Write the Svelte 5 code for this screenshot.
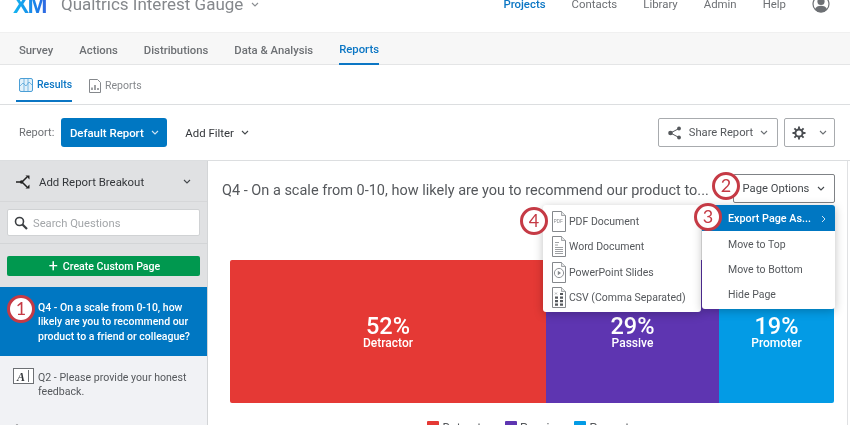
<script lang="ts">
	const topLinks = ['Contacts', 'Library', 'Admin', 'Help'];
	const navItems = ['Survey', 'Actions', 'Distributions', 'Data & Analysis'];
	const segments = [
		{ pct: 52, label: 'Detractor', color: '#e53935', width: 316 },
		{ pct: 29, label: 'Passive', color: '#5e35b1', width: 173 },
		{ pct: 19, label: 'Promoter', color: '#039be5', width: 115 }
	];
	const pageMenu = ['Move to Top', 'Move to Bottom', 'Hide Page'];
</script>

{#snippet chevron(color = '#6b6f73')}
	<svg class="chev" viewBox="0 0 8 5" width="8" height="5" aria-hidden="true">
		<path d="M1 1l3 3 3-3" fill="none" stroke={color} stroke-width="1.1" />
	</svg>
{/snippet}

{#snippet doc(kind)}
	<svg class="doc" viewBox="0 0 14 21" width="14" height="21" aria-hidden="true">
		<path d="M.5.5h9l4 4v16H.5z" fill="#fff" stroke="#85888c" />
		<path d="M9.500.5v4h4" fill="#e4e5e6" stroke="#85888c" stroke-width=".7" />
		{#if kind === 'pdf'}
			<text x="1.800" y="12" font-size="4.500" fill="#85888c" font-family="Liberation Sans, sans-serif">PDF</text>
		{:else if kind === 'word'}
			<path d="M3 6.500h4M3 9h3M3 11.500h8M3 13.500h8M3 15.500h8M3 17.500h8" stroke="#85888c" stroke-width=".8" />
		{:else if kind === 'ppt'}
			<circle cx="7" cy="11" r="4.600" fill="none" stroke="#85888c" stroke-width=".9" />
			<path d="M5.800 8.800l3.200 2.200-3.200 2.200z" fill="#85888c" />
		{:else}
			<path d="M3 5.500l2 2M5 5.500l-2 2" stroke="#85888c" stroke-width=".6" />
			<path d="M8 6h3v2H8zM8 9.500h3v2.200H8zM3 9.500h3v2.200H3zM3 13h3v2.200H3zM8 13h3v2.200H8zM3 16.500h3v2.200H3zM8 16.500h3v2.200H8z" fill="#55585c" />
		{/if}
	</svg>
{/snippet}

<div class="page">
	<header class="top">
		<div class="brand">
			<span class="logo">XM</span>
			<span class="project">Qualtrics Interest Gauge</span>
			{@render chevron('#8a8d91')}
		</div>
		<nav class="links">
			<a class="link on" href="#p">Projects</a>
			{#each topLinks as l}
				<a class="link" href="#p">{l}</a>
			{/each}
			<svg class="avatar" viewBox="0 0 18 18" width="18" height="18" aria-hidden="true">
				<circle cx="9" cy="9" r="8" fill="#fff" stroke="#6d7074" stroke-width="1.200" />
				<circle cx="9" cy="6.500" r="3.600" fill="#6d7074" />
				<path d="M2.800 14.500c1-3 3.500-3.800 6.200-3.800s5.200.8 6.200 3.800A8 8 0 0 1 2.800 14.500z" fill="#6d7074" />
			</svg>
		</nav>
	</header>

	<nav class="mainnav">
		{#each navItems as n}
			<span class="navitem">{n}</span>
		{/each}
		<span class="navitem active">Reports</span>
	</nav>

	<div class="tabs">
		<span class="tab active">
			<svg viewBox="0 0 14 14" width="14" height="14" aria-hidden="true">
				<rect x=".5" y=".5" width="13" height="13" rx="1.500" fill="#e3f1fa" stroke="#4b9fd6" />
				<path d="M1 8l3-3 3 3 3-4 3 3M5 1v12M9 1v12" fill="none" stroke="#4b9fd6" stroke-width=".7" />
			</svg>
			Results
		</span>
		<span class="tab">
			<svg viewBox="0 0 12 14" width="12" height="14" aria-hidden="true">
				<path d="M.5.500h8l3 3v10H.5z" fill="#fff" stroke="#85888c" />
				<path d="M3 11V8.500M6 11V6M9 11V9" stroke="#6d7074" stroke-width="1.300" />
			</svg>
			Reports
		</span>
	</div>

	<div class="toolbar">
		<span class="rep-label">Report:</span>
		<button class="primary">Default Report {@render chevron('#cfe4f3')}</button>
		<button class="plain">Add Filter {@render chevron('#44484c')}</button>
		<span class="spacer"></span>
		<button class="outline share">
			<svg viewBox="0 0 14 14" width="14" height="14" aria-hidden="true">
				<path d="M2.500 7L11 2.500M2.500 7L11 11.500" stroke="#55585c" stroke-width="1" />
				<circle cx="2.500" cy="7" r="2.300" fill="#55585c" />
				<circle cx="11" cy="2.500" r="1.900" fill="#55585c" />
				<circle cx="11" cy="11.500" r="1.900" fill="#55585c" />
			</svg>
			Share Report {@render chevron()}
		</button>
		<button class="outline gear">
			<svg viewBox="0 0 14 14" width="14" height="14" aria-hidden="true">
				<circle cx="7" cy="7" r="3.600" fill="none" stroke="#4a4d51" stroke-width="2" />
				<path d="M7 .5v2.500M7 11v2.500M.5 7H3M11 7h2.500M2.400 2.400l1.800 1.800M9.800 9.800l1.800 1.800M11.600 2.400L9.800 4.200M4.200 9.800l-1.800 1.800" stroke="#4a4d51" stroke-width="1.900" />
			</svg>
			{@render chevron()}
		</button>
	</div>

	<div class="body">
		<aside class="side">
			<div class="breakout">
				<svg viewBox="0 0 16 16" width="16" height="16" aria-hidden="true">
					<path d="M1 8h6l5-5M7 8l5 5" fill="none" stroke="#222" stroke-width="1.500" />
					<circle cx="6.500" cy="8" r="1.700" fill="#222" />
					<path d="M10.500 1.500h4v4zM10.500 14.500h4v-4z" fill="#222" />
				</svg>
				<span class="grow">Add Report Breakout</span>
				{@render chevron('#44484c')}
			</div>
			<div class="searchwrap">
				<div class="search">
					<svg viewBox="0 0 14 14" width="14" height="14" aria-hidden="true">
						<circle cx="5.500" cy="5.500" r="4" fill="none" stroke="#3c3f43" stroke-width="1.600" />
						<path d="M8.500 8.500l4.500 4.500" stroke="#3c3f43" stroke-width="2.200" />
					</svg>
					<span>Search Questions</span>
				</div>
			</div>
			<div class="createwrap">
				<button class="create"><span class="plus">+</span> Create Custom Page</button>
			</div>
			<div class="q current">Q4 - On a scale from 0-10, how likely are you to recommend our product to a friend or colleague?</div>
			<div class="q">
				<svg class="qicon" viewBox="0 0 21 16" width="21" height="16" aria-hidden="true">
					<rect x=".5" y=".5" width="20" height="15" fill="#fff" stroke="#6d7074" />
					<text x="4" y="13" font-size="12" font-weight="700" font-style="italic" font-family="Liberation Serif, serif" fill="#33363a">A</text>
					<path d="M15.500 2v12" stroke="#6d7074" />
				</svg>
				Q2 - Please provide your honest feedback.
			</div>
			<div class="q more">
				<svg viewBox="0 0 18 6" width="18" height="6" aria-hidden="true">
					<circle cx="3" cy="3" r="1.500" fill="#222" />
					<path d="M10 3h7" stroke="#85888c" />
				</svg>
			</div>
		</aside>

		<main class="content">
			<div class="head">
				<h2>Q4 - On a scale from 0-10, how likely are you to recommend our product to...</h2>
				<button class="outline pageopts">Page Options {@render chevron('#44484c')}</button>
			</div>
			<div class="chart">
				{#each segments as s}
					<div class="seg" style:background={s.color} style:width="{s.width}px">
						<strong>{s.pct}%</strong>
						<span>{s.label}</span>
					</div>
				{/each}
			</div>
			<div class="legend">
				{#each segments as s}
					<span class="key"><i style:background={s.color}></i>{s.label}</span>
				{/each}
			</div>
		</main>
	</div>

	<div class="menu submenu">
		<div class="sub">{@render doc('pdf')} PDF Document</div>
		<div class="sub">{@render doc('word')} Word Document</div>
		<div class="sub">{@render doc('ppt')} PowerPoint Slides</div>
		<div class="sub">{@render doc('csv')} CSV (Comma Separated)</div>
	</div>
	<div class="menu pagemenu">
		<div class="mi sel">
			Export Page As...
			<svg viewBox="0 0 5 8" width="5" height="8" aria-hidden="true"><path d="M1 1l3 3-3 3" fill="none" stroke="#cfe4f3" /></svg>
		</div>
		{#each pageMenu as m}
			<div class="mi">{m}</div>
		{/each}
	</div>

	<span class="step s1">1</span>
	<span class="step s2">2</span>
	<span class="step s3">3</span>
	<span class="step s4">4</span>
</div>

<style>
	:global(body) {
		margin: 0;
		background: #fff;
	}

	.page {
		position: relative;
		width: 850px;
		height: 425px;
		overflow: hidden;
		background: #fff;
		font-family: Roboto, 'Liberation Sans', sans-serif;
		font-size: 11.400px;
		color: #55585c;
		filter: blur(0.4px);
	}

	button {
		font: inherit;
		cursor: pointer;
	}

	.top {
		height: 32px;
		display: flex;
		justify-content: space-between;
		align-items: flex-start;
		padding: 0 20px 0 13px;
		box-sizing: border-box;
	}

	.brand {
		display: flex;
		align-items: center;
		height: 8px;
	}

	.logo {
		font: 700 24px 'Liberation Sans', sans-serif;
		letter-spacing: -1.500px;
		width: 48px;
		margin-top: 2px;
		background: linear-gradient(90deg, #13b6f0, #1a7ee8 50%, #5a45d6);
		-webkit-background-clip: text;
		background-clip: text;
		color: transparent;
	}

	.project {
		font-size: 17px;
		color: #85888c;
		margin-right: 8px;
	}

	.links {
		display: flex;
		align-items: center;
		height: 8px;
		gap: 26px;
	}

	.link {
		color: #6d7074;
		text-decoration: none;
	}

	.link.on {
		color: #0b76c4;
		font-weight: 500;
	}

	.mainnav {
		height: 31px;
		display: flex;
		gap: 26px;
		padding-left: 19px;
		background: #f7f7f7;
		border-top: 1px solid #f0f0f0;
		border-bottom: 1px solid #e4e5e6;
	}

	.navitem {
		display: flex;
		align-items: center;
		color: #6d7074;
		font-weight: 500;
		font-size: 11.300px;
		padding-top: 3px;
	}

	.navitem.active {
		color: #0b76c4;
		border-bottom: 2px solid #0b76c4;
		margin-bottom: -1px;
	}

	.tabs {
		height: 39px;
		display: flex;
		gap: 14px;
		padding-left: 16px;
		border-bottom: 1px solid #dcdee0;
		font-size: 10.500px;
	}

	.tab {
		display: flex;
		align-items: center;
		gap: 4px;
		padding: 4px 0 0 3px;
		color: #85888c;
		margin-bottom: 2px;
	}

	.tab.active {
		color: #0b76c4;
		font-weight: 500;
		border-bottom: 2px solid #0b76c4;
	}

	.toolbar {
		height: 55px;
		display: flex;
		align-items: center;
		padding: 0 15px 0 19px;
		border-bottom: 1px solid #dcdee0;
	}

	.rep-label {
		font-size: 11px;
		color: #6d7074;
		margin-right: 7px;
	}

	.primary {
		width: 106px;
		height: 29px;
		border: 0;
		border-radius: 3px;
		background: #0077c2;
		color: #fff;
		font-weight: 500;
		display: flex;
		align-items: center;
		justify-content: center;
		gap: 7px;
		padding: 0;
	}

	.plain {
		border: 0;
		background: none;
		color: #33363a;
		margin-left: 18px;
		display: flex;
		align-items: center;
		gap: 7px;
		padding: 0;
	}

	.spacer {
		flex: 1;
	}

	.outline {
		height: 29px;
		box-sizing: border-box;
		border: 1px solid #a8abae;
		border-radius: 2px;
		background: #fff;
		color: #55585c;
		display: flex;
		align-items: center;
		padding: 0;
		font-size: 11.200px;
	}

	.share {
		width: 120px;
		justify-content: center;
		gap: 7px;
		margin-right: 6px;
	}

	.gear {
		width: 51px;
		justify-content: center;
		gap: 13px;
	}

	.body {
		display: flex;
		height: 264px;
	}

	.side {
		width: 207px;
		flex: none;
		background: #e0e1e3;
		border-right: 1px solid #d3d5d7;
	}

	.breakout {
		height: 41px;
		box-sizing: border-box;
		display: flex;
		align-items: center;
		gap: 8px;
		padding: 1px 16px 0 15px;
		color: #33363a;
		border-bottom: 1px solid #d6d7d9;
	}

	.grow {
		flex: 1;
	}

	.searchwrap {
		height: 42px;
		box-sizing: border-box;
		padding: 7px 7px 0 7px;
		border-bottom: 1px solid #d3d5d7;
	}

	.search {
		height: 27px;
		box-sizing: border-box;
		background: #fff;
		border: 1px solid #d0d2d4;
		border-radius: 2px;
		display: flex;
		align-items: center;
		gap: 5px;
		padding: 1px 0 0 6px;
		color: #a3a6a9;
		font-size: 11.200px;
	}

	.createwrap {
		padding: 12px 7px 11px 7px;
	}

	.create {
		width: 100%;
		height: 20px;
		border: 0;
		border-radius: 2px;
		background: #00984f;
		color: #fff;
		font-size: 10.600px;
		font-weight: 500;
		display: flex;
		align-items: center;
		justify-content: center;
		gap: 5px;
		padding: 0 0 0 2px;
	}

	.plus {
		font-size: 16px;
		font-weight: 400;
		line-height: 1;
	}

	.q {
		padding: 15px 8px 10px 38px;
		background: #f1f2f5;
		line-height: 14.300px;
		color: #55585c;
		font-size: 10.600px;
		position: relative;
	}

	.q.current {
		height: 69px;
		box-sizing: border-box;
		padding-top: 14px;
		background: #0077c2;
		color: #fff;
		font-size: 10.500px;
		font-weight: 500;
	}

	.qicon {
		position: absolute;
		left: 13px;
		top: 12px;
	}

	.q.more {
		padding: 9px 0 0 14px;
		height: 30px;
	}

	.content {
		flex: 1;
		padding: 0 13px 0 14px;
		min-width: 0;
		border-right: 1px solid #e0e1e3;
		margin-right: 2px;
	}

	.head {
		height: 99px;
		display: flex;
		justify-content: space-between;
		align-items: flex-start;
		box-sizing: border-box;
		padding-top: 13px;
	}

	h2 {
		margin: 8px 0 0;
		font-size: 14.500px;
		font-weight: 400;
		color: #55585c;
		white-space: nowrap;
	}

	.pageopts {
		width: 102px;
		flex: none;
		justify-content: center;
		gap: 8px;
		margin-right: -1px;
		border-color: #7f8286;
		color: #44484c;
	}

	.chart {
		display: flex;
		height: 143px;
		margin-left: 8px;
		border-radius: 2px;
		overflow: hidden;
	}

	.seg {
		flex: none;
		display: flex;
		flex-direction: column;
		align-items: center;
		justify-content: center;
		color: #fff;
		padding-top: 1px;
		box-sizing: border-box;
	}

	.seg strong {
		font-size: 23.500px;
		font-weight: 500;
		line-height: 22px;
	}

	.seg span {
		font-size: 12px;
		font-weight: 500;
		line-height: 13px;
	}

	.legend {
		display: flex;
		justify-content: center;
		gap: 13px;
		margin-top: 18px;
		margin-left: 11px;
		color: #55585c;
		font-size: 12px;
	}

	.key {
		display: flex;
		gap: 3px;
		align-items: flex-start;
	}

	.key i {
		width: 12px;
		height: 12px;
		border-radius: 1px;
		display: block;
	}

	.menu {
		position: absolute;
		background: #fff;
		border-radius: 3px;
		box-shadow: 0 2px 10px rgba(0, 0, 0, 0.25);
		font-size: 10.500px;
		color: #55585c;
	}

	.submenu {
		left: 543px;
		top: 205px;
		width: 158px;
		height: 107px;
		padding-top: 4px;
		box-sizing: border-box;
	}

	.sub {
		height: 25.300px;
		display: flex;
		align-items: center;
		gap: 3px;
		padding-left: 9px;
	}

	.pagemenu {
		left: 702px;
		top: 205px;
		width: 133px;
		height: 104px;
		overflow: hidden;
	}

	.mi {
		height: 25px;
		display: flex;
		align-items: center;
		justify-content: space-between;
		padding: 1px 9px 0 26px;
		box-sizing: border-box;
	}

	.mi.sel {
		height: 26px;
		background: #0077c2;
		color: #fff;
		font-size: 10.800px;
		font-weight: 500;
	}

	.step {
		position: absolute;
		width: 28px;
		height: 28px;
		box-sizing: border-box;
		border: 3px solid #c53a45;
		border-radius: 50%;
		background: #fff;
		color: #c53a45;
		font: 400 18px/21px Lato, sans-serif;
		text-align: center;
	}

	.s1 { left: 7px; top: 295px; }
	.s2 { left: 712px; top: 172px; }
	.s3 { left: 694px; top: 203px; }
	.s4 { left: 520px; top: 207px; }
</style>
